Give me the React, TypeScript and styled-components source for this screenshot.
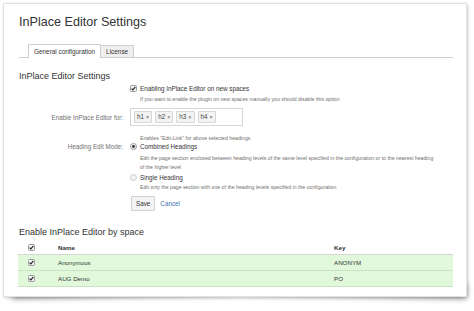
import styled, { createGlobalStyle } from "styled-components";

const GlobalStyle = createGlobalStyle`
  html, body {
    margin: 0;
    padding: 0;
    background: #fff;
  }
  body {
    font-family: "Liberation Sans", Arial, sans-serif;
    color: #333;
  }
`;

const Stage = styled.div`
  position: relative;
  isolation: isolate;
  width: 474px;
  height: 311px;
  box-sizing: border-box;
  padding: 3px 7px 0 3px;
  overflow: hidden;
`;

const Card = styled.div`
  position: relative;
  background: #fff;
  border: 1px solid #e2e2e2;
  box-shadow: 1px 1px 3px rgba(0, 0, 0, 0.2);
  padding: 10px 13px 9px 15px;

  &::before,
  &::after {
    content: "";
    position: absolute;
    z-index: -1;
    bottom: 6px;
    width: 49%;
    height: 14px;
    background: #999;
    box-shadow: 0 6px 6px rgba(0, 0, 0, 0.5);
  }
  &::before {
    left: 8px;
    transform: rotate(-1deg);
  }
  &::after {
    right: 0;
    transform: rotate(1deg);
  }
`;

const Title = styled.h1`
  margin: 0;
  font-size: 12.6px;
  line-height: 16px;
  font-weight: normal;
  color: #333;
`;

const TabBar = styled.div`
  display: flex;
  margin-top: 14px;
  padding-left: 9px;
  height: 13px;
  border-bottom: 1px solid #cfcfcf;
`;

const Tab = styled.div<{ $active?: boolean }>`
  box-sizing: border-box;
  height: ${(p) => (p.$active ? "14px" : "13px")};
  margin-top: ${(p) => (p.$active ? "0" : "1px")};
  padding: 0 5px;
  font-size: 6.4px;
  line-height: ${(p) => (p.$active ? "13px" : "12px")};
  color: #333;
  background: ${(p) => (p.$active ? "#fff" : "#efefef")};
  border: 1px solid #cfcfcf;
  border-bottom: ${(p) => (p.$active ? "none" : "1px solid #cfcfcf")};
  border-left: ${(p) => (p.$active ? "1px solid #cfcfcf" : "none")};
`;

const SectionTitle = styled.h2<{ $top: number }>`
  margin: ${(p) => p.$top}px 0 0;
  font-size: 9px;
  line-height: 11px;
  font-weight: normal;
  color: #333;
`;

const FormRow = styled.div<{ $top: number }>`
  display: grid;
  grid-template-columns: 104px 1fr;
  column-gap: 7px;
  align-items: center;
  margin-top: ${(p) => p.$top}px;
`;

const Label = styled.div`
  text-align: right;
  font-size: 6.3px;
  line-height: 9px;
  color: #707070;
`;

const Field = styled.div`
  display: flex;
  flex-direction: column;
`;

const Choice = styled.label<{ $top?: number }>`
  display: flex;
  align-items: center;
  gap: 3px;
  margin-top: ${(p) => p.$top ?? 0}px;
  font-size: 6.3px;
  line-height: 9px;
  color: #333;
`;

const Desc = styled.div<{ $top: number }>`
  margin-top: ${(p) => p.$top}px;
  padding-left: 10px;
  font-size: 5.2px;
  line-height: 9px;
  color: #707070;
  white-space: nowrap;
`;

const TagInput = styled.div`
  box-sizing: border-box;
  width: 113px;
  height: 18px;
  border: 1px solid #d6d6d6;
  display: flex;
  align-items: center;
  gap: 3px;
  padding-left: 3px;
`;

const Tag = styled.span`
  display: inline-flex;
  align-items: center;
  gap: 2px;
  height: 10px;
  padding: 0 2px;
  font-size: 6.3px;
  line-height: 10px;
  color: #444;
  background: #f3f3f3;
  border: 1px solid #d6d6d6;
  border-radius: 1px;
`;

const Times = styled.span`
  font-size: 5.4px;
  color: #555;
`;

const Actions = styled.div`
  display: flex;
  align-items: center;
  gap: 5px;
  margin-top: 4px;
  padding-left: 1px;
`;

const Button = styled.button`
  box-sizing: border-box;
  height: 15px;
  padding: 0 4px;
  font-family: inherit;
  font-size: 6.3px;
  color: #333;
  background: #f4f4f4;
  border: 1px solid #cfcfcf;
  border-radius: 1px;
`;

const LinkText = styled.a`
  font-size: 6.3px;
  color: #3b73af;
  text-decoration: none;
`;

const Table = styled.div`
  margin-top: 3px;
  margin-left: -1px;
`;

const TableRow = styled.div<{ $head?: boolean }>`
  display: grid;
  grid-template-columns: 40px 276px 1fr;
  align-items: center;
  height: ${(p) => (p.$head ? "13px" : "15px")};
  background: ${(p) => (p.$head ? "#fff" : "#e1f8db")};
  border-bottom: 1px solid ${(p) => (p.$head ? "#d5d5d5" : "#c9e4c2")};
  font-size: 6.2px;
  font-weight: ${(p) => (p.$head ? "bold" : "normal")};
  color: #333;
`;

const Cell = styled.div<{ $check?: boolean }>`
  display: flex;
  align-items: center;
  padding-left: ${(p) => (p.$check ? "10px" : "0")};
`;

function CheckBox() {
  return (
    <svg width="7" height="7" viewBox="0 0 7 7">
      <rect x="0.5" y="0.5" width="6" height="6" rx="1" fill="#f2f2f2" stroke="#9a9a9a" />
      <path d="M1.6 3.6 L2.9 4.9 L5.4 1.9" fill="none" stroke="#222" strokeWidth="1.1" />
    </svg>
  );
}

function Radio({ checked }: { checked?: boolean }) {
  return (
    <svg width="7" height="7" viewBox="0 0 7 7">
      <circle cx="3.5" cy="3.5" r="3" fill={checked ? "#f2f2f2" : "#f4f4f4"} stroke={checked ? "#9a9a9a" : "#cccccc"} />
      {checked && <circle cx="3.5" cy="3.5" r="1.4" fill="#333" />}
    </svg>
  );
}

const spaces = [
  { name: "Anonymous", key: "ANONYM" },
  { name: "AUG Demo", key: "PO" },
];

export default function App() {
  return (
    <>
      <GlobalStyle />
      <Stage>
        <Card>
          <Title>InPlace Editor Settings</Title>
          <TabBar>
            <Tab $active>General configuration</Tab>
            <Tab>License</Tab>
          </TabBar>

          <SectionTitle $top={13}>InPlace Editor Settings</SectionTitle>

          <FormRow $top={2}>
            <Label />
            <Field>
              <Choice>
                <CheckBox />
                Enabling InPlace Editor on new spaces
              </Choice>
              <Desc $top={2}>
                If you want to enable the plugin on new spaces manually you should disable this option
              </Desc>
            </Field>
          </FormRow>

          <FormRow $top={4}>
            <Label>Enable InPlace Editor for:</Label>
            <TagInput>
              {["h1", "h2", "h3", "h4"].map((h) => (
                <Tag key={h}>
                  {h} <Times>×</Times>
                </Tag>
              ))}
            </TagInput>
          </FormRow>
          <FormRow $top={8}>
            <Label />
            <Desc $top={0}>Enables "Edit-Link" for above selected headings</Desc>
          </FormRow>

          <FormRow $top={-1}>
            <Label>Heading Edit Mode:</Label>
            <Choice>
              <Radio checked />
              Combined Headings
            </Choice>
          </FormRow>
          <FormRow $top={0}>
            <Label />
            <Field>
              <Desc $top={3}>
                Edit the page section enclosed between heading levels of the same level specified in the configuration or to the nearest heading
                <br />
                of the higher level
              </Desc>
              <Choice $top={1}>
                <Radio />
                Single Heading
              </Choice>
              <Desc $top={1}>
                Edit only the page section with one of the heading levels specified in the configuration
              </Desc>
              <Actions>
                <Button>Save</Button>
                <LinkText href="#">Cancel</LinkText>
              </Actions>
            </Field>
          </FormRow>

          <SectionTitle $top={16}>Enable InPlace Editor by space</SectionTitle>
          <Table>
            <TableRow $head>
              <Cell $check>
                <CheckBox />
              </Cell>
              <Cell>Name</Cell>
              <Cell>Key</Cell>
            </TableRow>
            {spaces.map((s) => (
              <TableRow key={s.key}>
                <Cell $check>
                  <CheckBox />
                </Cell>
                <Cell>{s.name}</Cell>
                <Cell>{s.key}</Cell>
              </TableRow>
            ))}
          </Table>
        </Card>
      </Stage>
    </>
  );
}
